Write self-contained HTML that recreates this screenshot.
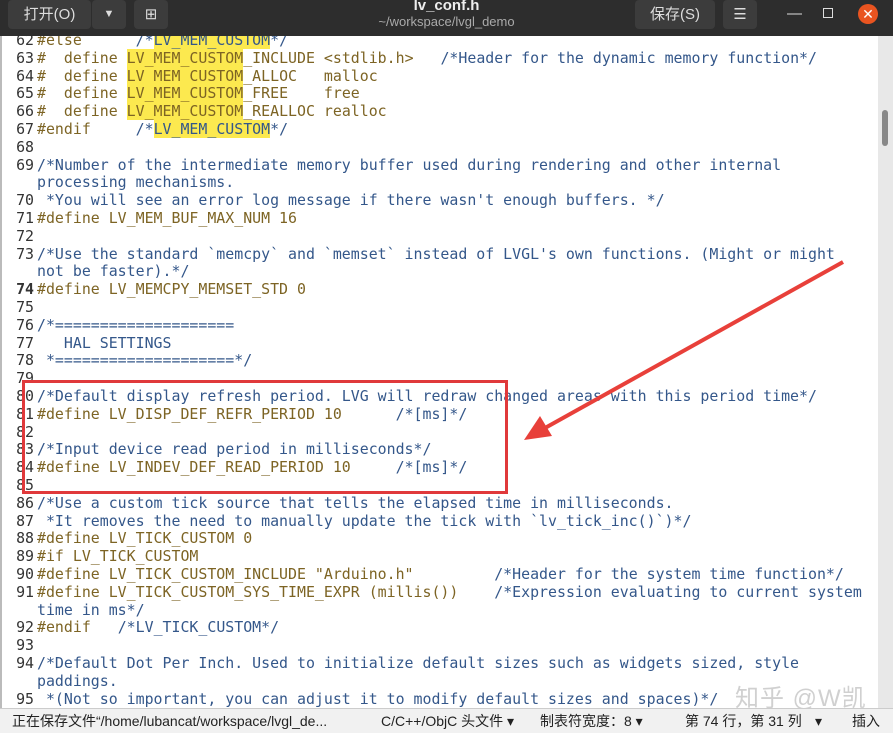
<!DOCTYPE html>
<html><head><meta charset="utf-8"><style>
body{margin:0;width:893px;height:732px;overflow:hidden;background:#fff;font-family:"Liberation Sans","Noto Sans CJK SC",sans-serif;position:relative}
.tb{position:absolute;left:0;top:0;width:893px;height:36px;background:#2d2d2d}
.btn{position:absolute;top:0;height:29px;background:#3c3c3c;border-radius:4px;color:#ddd;font-size:15px;line-height:29px;text-align:center}
.ed{position:absolute;left:0;top:36px;width:878px;height:672px;overflow:hidden;background:#fff;border-left:2px solid #bbb}
.row{position:absolute;left:0;height:18px;font:14.9px/18px "DejaVu Sans Mono","Liberation Mono",monospace;white-space:pre;width:878px}
.n{display:inline-block;width:32px;text-align:right;color:#333;margin-right:3px}
.c{color:#34578a}.p{color:#7d6424}.h{background:#fce94f}
.sb{position:absolute;left:0;top:708px;width:893px;height:24px;background:#f1f1f1;border-top:1px solid #ccc;font-size:14px;color:#222;line-height:24px}
.sb span{position:absolute;top:0}
</style></head><body>
<div class="tb">
<div class="btn" style="left:8px;width:83px">打开(O)</div>
<div class="btn" style="left:92px;width:34px;font-size:11px">▼</div>
<div class="btn" style="left:134px;width:34px;font-size:15px">⊞</div>
<div style="position:absolute;left:0;width:893px;top:-3px;text-align:center;color:#eee;font-weight:bold;font-size:15px">lv_conf.h</div>
<div style="position:absolute;left:0;width:893px;top:14px;text-align:center;color:#aaa;font-size:13px">~/workspace/lvgl_demo</div>
<div class="btn" style="left:635px;width:80px">保存(S)</div>
<div class="btn" style="left:723px;width:34px">☰</div>
<div style="position:absolute;left:787px;top:5px;color:#ddd;font-size:15px">—</div>
<div style="position:absolute;left:823px;top:8px;width:8px;height:8px;border:1.5px solid #ddd"></div>
<div style="position:absolute;left:858px;top:4px;width:20px;height:20px;border-radius:10px;background:#e95420;color:#fff;font-size:14px;line-height:20px;text-align:center">✕</div>
</div>
<div class="ed">
<div id="L"></div>
</div>
<div style="position:absolute;left:878px;top:36px;width:15px;height:672px;background:#e8e8e8"></div>
<div style="position:absolute;left:882px;top:110px;width:6px;height:36px;border-radius:3px;background:#888"></div>
<div style="position:absolute;left:22px;top:380px;width:486px;height:114px;border:3px solid #e0393b;box-sizing:border-box"></div>
<svg style="position:absolute;left:0;top:0" width="893" height="732"><line x1="843" y1="262" x2="545" y2="428" stroke="#e8403a" stroke-width="4"/><polygon points="524,440 540,416 552,436" fill="#e8403a"/></svg>
<div style="position:absolute;left:735px;top:678px;color:rgba(200,200,200,.85);font-size:24px;letter-spacing:1px">知乎 @W凯</div>
<div class="sb"><span style="left:12px">正在保存文件“/home/lubancat/workspace/lvgl_de...</span><span style="left:381px">C/C++/ObjC 头文件 ▾</span><span style="left:540px">制表符宽度：8 ▾</span><span style="left:685px">第 74 行，第 31 列</span><span style="left:815px">▾</span><span style="left:852px">插入</span></div>
<script>
var R=[
[62,'<span class="p">#else</span>      <span class="c">/*<span class="h">LV_MEM_CUSTOM</span>*/</span>'],
[63,'<span class="p">#  define <span class="h">LV_MEM_CUSTOM</span>_INCLUDE &lt;stdlib.h&gt;</span>   <span class="c">/*Header for the dynamic memory function*/</span>'],
[64,'<span class="p">#  define <span class="h">LV_MEM_CUSTOM</span>_ALLOC   malloc</span>'],
[65,'<span class="p">#  define <span class="h">LV_MEM_CUSTOM</span>_FREE    free</span>'],
[66,'<span class="p">#  define <span class="h">LV_MEM_CUSTOM</span>_REALLOC realloc</span>'],
[67,'<span class="p">#endif</span>     <span class="c">/*<span class="h">LV_MEM_CUSTOM</span>*/</span>'],
[68,''],
[69,'<span class="c">/*Number of the intermediate memory buffer used during rendering and other internal</span>'],
['','<span class="c">processing mechanisms.</span>'],
[70,'<span class="c"> *You will see an error log message if there wasn\'t enough buffers. */</span>'],
[71,'<span class="p">#define LV_MEM_BUF_MAX_NUM 16</span>'],
[72,''],
[73,'<span class="c">/*Use the standard `memcpy` and `memset` instead of LVGL\'s own functions. (Might or might</span>'],
['','<span class="c">not be faster).*/</span>'],
['<b>74</b>','<span class="p">#define LV_MEMCPY_MEMSET_STD 0</span>'],
[75,''],
[76,'<span class="c">/*====================</span>'],
[77,'<span class="c">   HAL SETTINGS</span>'],
[78,'<span class="c"> *====================*/</span>'],
[79,''],
[80,'<span class="c">/*Default display refresh period. LVG will redraw changed areas with this period time*/</span>'],
[81,'<span class="p">#define LV_DISP_DEF_REFR_PERIOD 10</span>      <span class="c">/*[ms]*/</span>'],
[82,''],
[83,'<span class="c">/*Input device read period in milliseconds*/</span>'],
[84,'<span class="p">#define LV_INDEV_DEF_READ_PERIOD 10</span>     <span class="c">/*[ms]*/</span>'],
[85,''],
[86,'<span class="c">/*Use a custom tick source that tells the elapsed time in milliseconds.</span>'],
[87,'<span class="c"> *It removes the need to manually update the tick with `lv_tick_inc()`)*/</span>'],
[88,'<span class="p">#define LV_TICK_CUSTOM 0</span>'],
[89,'<span class="p">#if LV_TICK_CUSTOM</span>'],
[90,'<span class="p">#define LV_TICK_CUSTOM_INCLUDE "Arduino.h"</span>         <span class="c">/*Header for the system time function*/</span>'],
[91,'<span class="p">#define LV_TICK_CUSTOM_SYS_TIME_EXPR (millis())</span>    <span class="c">/*Expression evaluating to current system</span>'],
['','<span class="c">time in ms*/</span>'],
[92,'<span class="p">#endif</span>   <span class="c">/*LV_TICK_CUSTOM*/</span>'],
[93,''],
[94,'<span class="c">/*Default Dot Per Inch. Used to initialize default sizes such as widgets sized, style</span>'],
['','<span class="c">paddings.</span>'],
[95,'<span class="c"> *(Not so important, you can adjust it to modify default sizes and spaces)*/</span>']
];
var h='';for(var i=0;i<R.length;i++){h+='<div class="row" style="top:'+(-5+i*17.8)+'px"><span class="n">'+R[i][0]+'</span>'+R[i][1]+'</div>';}
document.getElementById('L').innerHTML=h;
</script>
</body></html>
